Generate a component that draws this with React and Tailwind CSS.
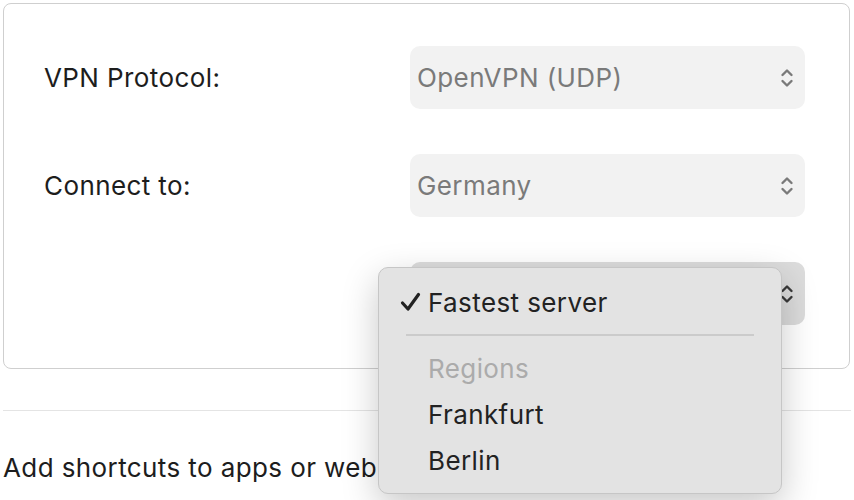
import React from 'react';

const Chevrons = () => (
  <svg width="14" height="22" viewBox="0 0 14 22" fill="none" stroke="currentColor" strokeWidth="2.4" strokeLinecap="round" strokeLinejoin="round">
    <path d="M2.5 8 L7 3.5 L11.5 8" />
    <path d="M2.5 14 L7 18.5 L11.5 14" />
  </svg>
);

const Select = ({ value, active }) => (
  <div
    className={
      'flex h-[63px] w-[395px] items-center justify-between rounded-[10px] pl-[7px] pr-[11px] ' +
      (active ? 'bg-[#dcdcdc] text-[#3a3a3a]' : 'bg-[#f2f2f2] text-[#7a7a7a]')
    }
  >
    <span className="text-[26px] leading-none tracking-[0.4px]">{value}</span>
    <Chevrons />
  </div>
);

// Settings row: label on the left, popup button on the right
const Row = ({ label, children }) => (
  <div className="flex items-center">
    <div className="w-[366px] text-[26px] leading-none tracking-[0.4px] text-[#1d1d1d]">{label}</div>
    {children}
  </div>
);

const Menu = () => (
  <div className="absolute left-[378px] top-[267px] h-[227px] w-[404px] rounded-[10px] border border-[#c6c6c6] bg-[#e3e3e3] pt-[11px] tracking-[0.4px] shadow-[0_12px_36px_rgba(0,0,0,0.22)]">
    <div className="relative flex h-[46px] items-center pl-[49px] text-[26px] text-[#222]">
      <svg className="absolute left-[21px] top-[13px]" width="21" height="20" viewBox="0 0 21 20" fill="none" stroke="#222" strokeWidth="3.2" strokeLinecap="round" strokeLinejoin="round">
        <path d="M2.5 11 L8 17 L18.5 2.5" />
      </svg>
      Fastest server
    </div>
    <div className="flex h-[20px] items-center px-[27px]">
      <div className="h-[2px] w-full bg-[#cbcbcb]" />
    </div>
    <div className="flex h-[46px] items-center pl-[49px] text-[26px] text-[#ababab]">Regions</div>
    <div className="flex h-[46px] items-center pl-[49px] text-[26px] text-[#222]">Frankfurt</div>
    <div className="flex h-[46px] items-center pl-[49px] text-[26px] text-[#222]">Berlin</div>
  </div>
);

export default function App() {
  return (
    <div className="relative h-[500px] w-[854px] overflow-hidden bg-white" style={{ fontFamily: 'Inter, "Noto Sans", sans-serif' }}>
      <div className="ml-[3px] mt-[3px] h-[366px] w-[847px] rounded-[8px] border border-[#cfcfcf] pl-[40px] pt-[42px]">
        <div className="flex flex-col gap-[45px]">
          <Row label="VPN Protocol:">
            <Select value="OpenVPN (UDP)" />
          </Row>
          <Row label="Connect to:">
            <Select value="Germany" />
          </Row>
          <Row label="">
            <Select value="" active />
          </Row>
        </div>
      </div>
      <div className="ml-[3px] mt-[41px] h-px w-[848px] bg-[#e4e4e4]" />
      <div className="ml-[3px] mt-[44px] text-[26px] leading-none tracking-[0.4px] text-[#1d1d1d]">Add shortcuts to apps or websites</div>
      <Menu />
    </div>
  );
}
